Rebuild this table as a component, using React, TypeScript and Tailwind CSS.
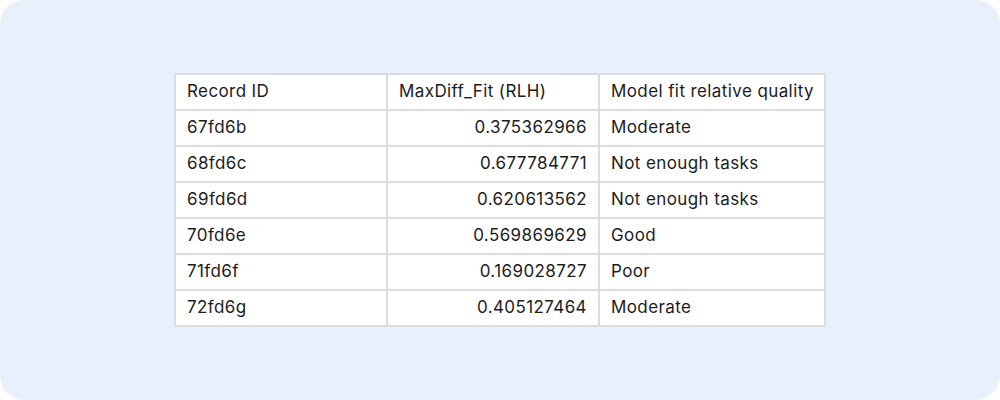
import React from "react";

const rows = [
  ["67fd6b", "0.375362966", "Moderate"],
  ["68fd6c", "0.677784771", "Not enough tasks"],
  ["69fd6d", "0.620613562", "Not enough tasks"],
  ["70fd6e", "0.569869629", "Good"],
  ["71fd6f", "0.169028727", "Poor"],
  ["72fd6g", "0.405127464", "Moderate"],
];

export default function App() {
  return (
    <div className="w-[1000px] h-[400px] bg-white">
      <div
        className="w-full h-full rounded-[24px] bg-[#e8f1fb] flex justify-center items-start pt-[73px]"
        style={{ fontFamily: "Inter, sans-serif" }}
      >
        <table className="table-fixed w-[652px] border-separate border-spacing-0 border border-[#dcdcdc] bg-white text-[17px] tracking-[0.4px] text-[#1c1c1c] whitespace-nowrap">
          <thead>
            <tr className="h-[36px]">
              <th className="w-[212px] border border-[#dcdcdc] px-[11px] text-left font-normal">Record ID</th>
              <th className="w-[212px] border border-[#dcdcdc] px-[11px] text-left font-normal">MaxDiff_Fit (RLH)</th>
              <th className="w-[226px] border border-[#dcdcdc] pl-[11px] pr-0 text-left font-normal">Model fit relative quality</th>
            </tr>
          </thead>
          <tbody>
            {rows.map((r) => (
              <tr key={r[0]} className="h-[36px]">
                <td className="border border-[#dcdcdc] px-[11px]">{r[0]}</td>
                <td className="border border-[#dcdcdc] px-[11px] text-right">{r[1]}</td>
                <td className="border border-[#dcdcdc] px-[11px]">{r[2]}</td>
              </tr>
            ))}
          </tbody>
        </table>
      </div>
    </div>
  );
}
